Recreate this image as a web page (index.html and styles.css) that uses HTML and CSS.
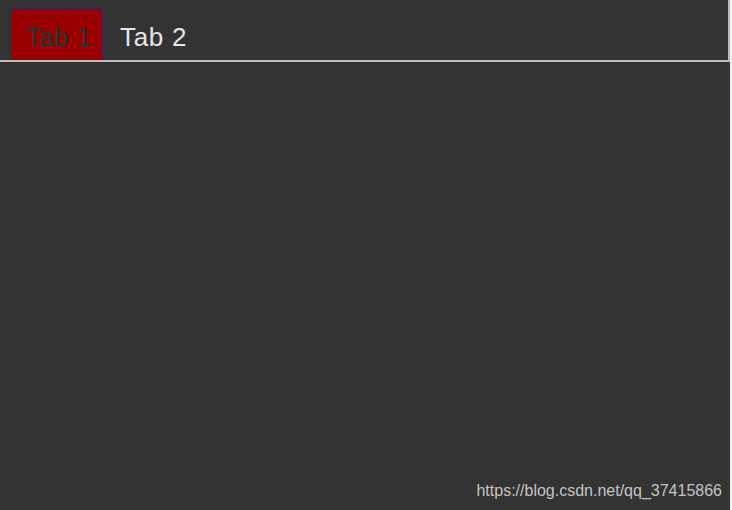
FILE: index.html
```html
<!DOCTYPE html>
<html>
<head>
<meta charset="utf-8">
<link rel="stylesheet" href="styles.css">
</head>
<body>
<div class="window">
  <div class="tabbar">
    <div class="tab tab-active">Tab 1</div>
    <div class="tab">Tab 2</div>
  </div>
  <div class="content"></div>
  <div class="watermark">https://blog.csdn.net/qq_37415866</div>
</div>
</body>
</html>
```
FILE: styles.css
```css
html, body {
  margin: 0;
  padding: 0;
  background: #f0f0f0;
  font-family: "Liberation Sans", Arial, sans-serif;
}
.window {
  position: relative;
  width: 730px;
  height: 510px;
  background: #333333;
  display: flex;
  flex-direction: column;
}
.tabbar {
  display: flex;
  align-items: flex-end;
  height: 60px;
  width: 728px;
  border-bottom: 2px solid #bdbdbd;
  border-right: 2px solid #bdbdbd;
}
.tab {
  height: 52px;
  box-sizing: border-box;
  padding: 14px 16px 0 17px;
  font-size: 26px;
  line-height: 30px;
  letter-spacing: 0.7px;
  color: #e6e6e6;
  white-space: nowrap;
}
.tab-active {
  margin-left: 11px;
  width: 92px;
  background: #990000;
  border: 1px solid #4b1a4f;
  border-bottom: none;
  color: #173a3a;
  padding: 13px 0 0 14px;
  letter-spacing: 0.4px;
}
.content {
  flex: 1;
}
.watermark {
  position: absolute;
  right: 8px;
  bottom: 10px;
  font-size: 16px;
  color: #c4c4c4;
}
```
